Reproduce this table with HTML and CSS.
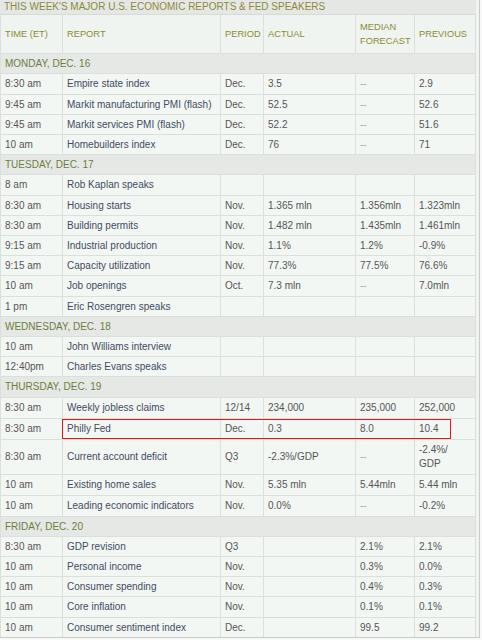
FILE: index.html
```html
<!DOCTYPE html>
<html>
<head>
<meta charset="utf-8">
<link rel="stylesheet" href="styles.css">
</head>
<body>
<div class="frame">
<table class="econ">
<colgroup>
<col class="c-time"><col class="c-report"><col class="c-period"><col class="c-actual"><col class="c-median"><col class="c-prev">
</colgroup>
<tr class="title"><td colspan="6">THIS WEEK'S MAJOR U.S. ECONOMIC REPORTS &amp; FED SPEAKERS</td></tr>
<tr class="head"><td>TIME (ET)</td><td>REPORT</td><td>PERIOD</td><td>ACTUAL</td><td>MEDIAN FORECAST</td><td>PREVIOUS</td></tr>
<tr class="day"><td colspan="6">MONDAY, DEC. 16</td></tr>
<tr><td>8:30 am</td><td class="rep">Empire state index</td><td>Dec.</td><td>3.5</td><td class="dash">--</td><td>2.9</td></tr>
<tr><td>9:45 am</td><td class="rep">Markit manufacturing PMI (flash)</td><td>Dec.</td><td>52.5</td><td class="dash">--</td><td>52.6</td></tr>
<tr><td>9:45 am</td><td class="rep">Markit services PMI (flash)</td><td>Dec.</td><td>52.2</td><td class="dash">--</td><td>51.6</td></tr>
<tr><td>10 am</td><td class="rep">Homebuilders index</td><td>Dec.</td><td>76</td><td class="dash">--</td><td>71</td></tr>
<tr class="day"><td colspan="6">TUESDAY, DEC. 17</td></tr>
<tr><td>8 am</td><td class="rep">Rob Kaplan speaks</td><td></td><td></td><td></td><td></td></tr>
<tr><td>8:30 am</td><td class="rep">Housing starts</td><td>Nov.</td><td>1.365 mln</td><td>1.356mln</td><td>1.323mln</td></tr>
<tr><td>8:30 am</td><td class="rep">Building permits</td><td>Nov.</td><td>1.482 mln</td><td>1.435mln</td><td>1.461mln</td></tr>
<tr><td>9:15 am</td><td class="rep">Industrial production</td><td>Nov.</td><td>1.1%</td><td>1.2%</td><td>-0.9%</td></tr>
<tr><td>9:15 am</td><td class="rep">Capacity utilization</td><td>Nov.</td><td>77.3%</td><td>77.5%</td><td>76.6%</td></tr>
<tr><td>10 am</td><td class="rep">Job openings</td><td>Oct.</td><td>7.3 mln</td><td class="dash">--</td><td>7.0mln</td></tr>
<tr><td>1 pm</td><td class="rep">Eric Rosengren speaks</td><td></td><td></td><td></td><td></td></tr>
<tr class="day"><td colspan="6">WEDNESDAY, DEC. 18</td></tr>
<tr><td>10 am</td><td class="rep">John Williams interview</td><td></td><td></td><td></td><td></td></tr>
<tr><td>12:40pm</td><td class="rep">Charles Evans speaks</td><td></td><td></td><td></td><td></td></tr>
<tr class="day"><td colspan="6">THURSDAY, DEC. 19</td></tr>
<tr class="tall"><td>8:30 am</td><td class="rep">Weekly jobless claims</td><td>12/14</td><td>234,000</td><td>235,000</td><td>252,000</td></tr>
<tr class="tall"><td>8:30 am</td><td class="rep">Philly Fed</td><td>Dec.</td><td>0.3</td><td>8.0</td><td>10.4</td></tr>
<tr class="tall"><td>8:30 am</td><td class="rep">Current account deficit</td><td>Q3</td><td>-2.3%/GDP</td><td class="dash">--</td><td>-2.4%/<br>GDP</td></tr>
<tr class="tall"><td>10 am</td><td class="rep">Existing home sales</td><td>Nov.</td><td>5.35 mln</td><td>5.44mln</td><td>5.44 mln</td></tr>
<tr class="tall"><td>10 am</td><td class="rep">Leading economic indicators</td><td>Nov.</td><td>0.0%</td><td class="dash">--</td><td>-0.2%</td></tr>
<tr class="day"><td colspan="6">FRIDAY, DEC. 20</td></tr>
<tr><td>8:30 am</td><td class="rep">GDP revision</td><td>Q3</td><td></td><td>2.1%</td><td>2.1%</td></tr>
<tr><td>10 am</td><td class="rep">Personal income</td><td>Nov.</td><td></td><td>0.3%</td><td>0.0%</td></tr>
<tr><td>10 am</td><td class="rep">Consumer spending</td><td>Nov.</td><td></td><td>0.4%</td><td>0.3%</td></tr>
<tr><td>10 am</td><td class="rep">Core inflation</td><td>Nov.</td><td></td><td>0.1%</td><td>0.1%</td></tr>
<tr><td>10 am</td><td class="rep">Consumer sentiment index</td><td>Dec.</td><td></td><td>99.5</td><td>99.2</td></tr>
</table>
<div class="highlight"></div>
</div>
</body>
</html>
```

FILE: styles.css
```css
html, body {
  margin: 0;
  padding: 0;
  background: #f7f8f7;
}
.frame {
  position: relative;
  width: 479px;
  height: 637px;
  overflow: hidden;
  background: #f1f3f1;
  border-right: 1px solid #c9cbc9;
  border-bottom: 1px solid #c9cbc9;
}
.econ {
  width: 475px;
  table-layout: fixed;
  border-collapse: collapse;
  font-family: "Liberation Sans", Arial, sans-serif;
  font-size: 10px;
  color: #555;
  background: #f3f7f4;
  margin-top: -3px;
}
.c-time { width: 62px; }
.c-report { width: 158px; }
.c-period { width: 43px; }
.c-actual { width: 92px; }
.c-median { width: 59px; }
.c-prev { width: 61px; }
.econ td {
  border: 1px solid #dae1dd;
  padding: 3px 3px 3px 4px;
  line-height: 13.2px;
  vertical-align: middle;
  text-align: left;
}
.econ .tall td {
  line-height: 14px;
}
.econ .title td {
  background: #e4e7e4;
  color: #8a8c3a;
  padding: 2px 3px 1px 3px;
  border-color: #e4e7e4;
  border-bottom-color: #d6dbd7;
}
.econ .head td {
  background: #eff4f0;
  color: #8a8c30;
  font-size: 9.3px;
  padding: 5px 3px 5px 4px;
  line-height: 14px;
}
.econ .day td {
  background: #e5e8e5;
  color: #6c7f3d;
  padding-top: 3px;
  padding-bottom: 3px;
}
.econ td.rep {
  color: #3f4b61;
}
.econ td.dash {
  color: #9aa;
}
.highlight {
  position: absolute;
  left: 62px;
  top: 419px;
  width: 387px;
  height: 18px;
  border: 1.5px solid #e3161b;
}
```
